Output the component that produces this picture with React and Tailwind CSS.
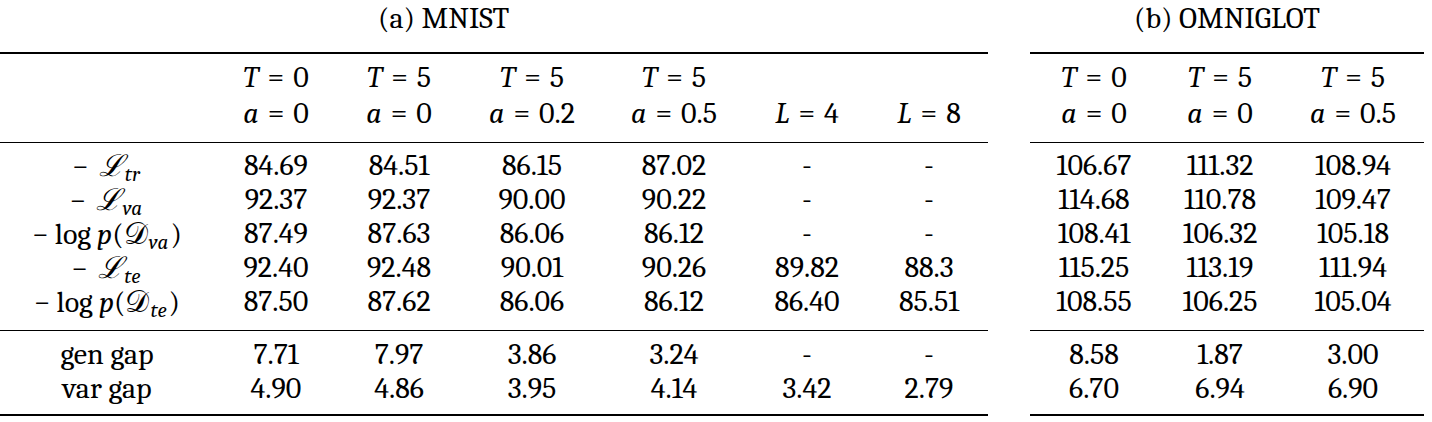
import React from "react";

const Eq = () => <span className="mx-[9px] not-italic">=</span>;
const I = ({ children }) => <span className="italic">{children}</span>;
const Sub = ({ children }) => (
  <span className="italic text-[21px] leading-none align-[-5px] ml-[1px] mr-[2px]">{children}</span>
);
const CalL = () => <span className="[font-family:DejaVu_Serif,serif] italic">ℒ</span>;
const CalD = () => <span className="[font-family:DejaVu_Serif,serif]">𝒟</span>;

const NegL = ({ s }) => (
  <span>
    −<span className="ml-[10px]"><CalL /></span>
    <Sub>{s}</Sub>
  </span>
);
const NegLogP = ({ s }) => (
  <span>
    −<span className="ml-[6px]">log</span>
    <span className="ml-[6px]"><I>p</I></span>(<CalD />
    <Sub>{s}</Sub>)
  </span>
);

const labels = [
  <NegL s="tr" />,
  <NegL s="va" />,
  <NegLogP s="va" />,
  <NegL s="te" />,
  <NegLogP s="te" />,
];

const mnistHead = [
  [<><I>T</I><Eq />0</>, <><I>a</I><Eq />0</>],
  [<><I>T</I><Eq />5</>, <><I>a</I><Eq />0</>],
  [<><I>T</I><Eq />5</>, <><I>a</I><Eq />0.2</>],
  [<><I>T</I><Eq />5</>, <><I>a</I><Eq />0.5</>],
  [null, <><I>L</I><Eq />4</>],
  [null, <><I>L</I><Eq />8</>],
];
const mnistRows = [
  ["84.69", "84.51", "86.15", "87.02", "-", "-"],
  ["92.37", "92.37", "90.00", "90.22", "-", "-"],
  ["87.49", "87.63", "86.06", "86.12", "-", "-"],
  ["92.40", "92.48", "90.01", "90.26", "89.82", "88.3"],
  ["87.50", "87.62", "86.06", "86.12", "86.40", "85.51"],
];
const mnistGap = [
  ["7.71", "7.97", "3.86", "3.24", "-", "-"],
  ["4.90", "4.86", "3.95", "4.14", "3.42", "2.79"],
];

const omHead = [
  [<><I>T</I><Eq />0</>, <><I>a</I><Eq />0</>],
  [<><I>T</I><Eq />5</>, <><I>a</I><Eq />0</>],
  [<><I>T</I><Eq />5</>, <><I>a</I><Eq />0.5</>],
];
const omRows = [
  ["106.67", "111.32", "108.94"],
  ["114.68", "110.78", "109.47"],
  ["108.41", "106.32", "105.18"],
  ["115.25", "113.19", "111.94"],
  ["108.55", "106.25", "105.04"],
];
const omGap = [
  ["8.58", "1.87", "3.00"],
  ["6.70", "6.94", "6.90"],
];

function Table({ cols, head, rows, gap, withLabels }) {
  return (
    <div className="flex flex-col">
      <div className="border-t-2 border-black" />
      <div className={`grid ${cols} pt-[6px] pb-[10px]`}>
        {withLabels && <div />}
        {head.map((h, i) => (
          <div key={i} className="flex flex-col items-center">
            <div className="h-[36px] leading-[36px] whitespace-nowrap">{h[0]}</div>
            <div className="h-[36px] leading-[36px] whitespace-nowrap">{h[1]}</div>
          </div>
        ))}
      </div>
      <div className="border-t border-black" />
      <div className="pt-[6px] pb-[11px] flex flex-col">
        {rows.map((r, ri) => (
          <div key={ri} className={`grid ${cols}`}>
            {withLabels && (
              <div className="h-[34px] leading-[34px] text-center whitespace-nowrap">
                {labels[ri]}
              </div>
            )}
            {r.map((v, i) => (
              <div key={i} className="h-[34px] leading-[34px] text-center whitespace-nowrap">
                {v}
              </div>
            ))}
          </div>
        ))}
      </div>
      <div className="border-t border-black" />
      <div className="pt-[7px] pb-[8px] flex flex-col">
        {gap.map((r, ri) => (
          <div key={ri} className={`grid ${cols}`}>
            {withLabels && (
              <div className="h-[34px] leading-[34px] text-center whitespace-nowrap">
                {ri === 0 ? "gen gap" : "var gap"}
              </div>
            )}
            {r.map((v, i) => (
              <div key={i} className="h-[34px] leading-[34px] text-center whitespace-nowrap">
                {v}
              </div>
            ))}
          </div>
        ))}
      </div>
      <div className="border-t-2 border-black" />
    </div>
  );
}

export default function App() {
  return (
    <div className="w-[1432px] h-[422px] bg-white text-black flex font-serif [font-family:Liberation_Serif,Tinos,Nimbus_Roman,Nimbus_Roman_No9_L,TeX_Gyre_Termes,FreeSerif,Times,Noto_Serif,Cambria,Georgia,ui-serif,DejaVu_Serif,serif] text-[30px]">
      <div className="w-[988px] flex flex-col">
        <div className="h-[52px] leading-[38px] pl-[378px] whitespace-nowrap">(a) MNIST</div>
        <Table
          cols="grid-cols-[214px_124px_122px_144px_140px_126px_118px]"
          head={mnistHead}
          rows={mnistRows}
          gap={mnistGap}
          withLabels
        />
      </div>
      <div className="ml-[42px] w-[394px] flex flex-col">
        <div className="h-[52px] leading-[38px] text-center whitespace-nowrap">(b) OMNIGLOT</div>
        <Table
          cols="grid-cols-[128px_124px_142px]"
          head={omHead}
          rows={omRows}
          gap={omGap}
        />
      </div>
    </div>
  );
}
